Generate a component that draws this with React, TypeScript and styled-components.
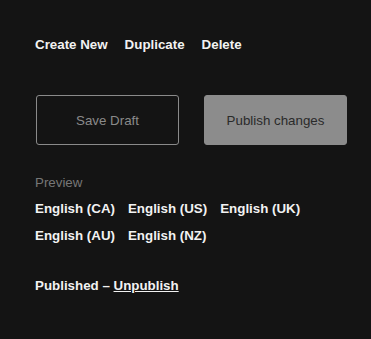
import styled, { createGlobalStyle } from "styled-components";

const GlobalStyle = createGlobalStyle`
  html, body {
    margin: 0;
    background: #141414;
  }
  body {
    font-family: "Liberation Sans", Arial, sans-serif;
  }
`;

const Panel = styled.div`
  display: flex;
  flex-direction: column;
  padding: 37px 24px 0 35px;
  color: #f2f2f2;
`;

const Toolbar = styled.div`
  display: flex;
  gap: 17px;
  margin-bottom: 42px;
`;

const ToolButton = styled.button`
  background: none;
  border: none;
  padding: 0;
  color: #f2f2f2;
  font: bold 13.33px "Liberation Sans", Arial, sans-serif;
  line-height: 16px;
  cursor: pointer;
`;

const Actions = styled.div`
  display: flex;
  gap: 25px;
  margin-left: 1px;
  margin-bottom: 30px;
`;

const ActionButton = styled.button<{ $primary?: boolean }>`
  width: 143px;
  height: 50px;
  border-radius: 3px;
  font: 13.33px "Liberation Sans", Arial, sans-serif;
  border: 1px solid ${(p) => (p.$primary ? "#8c8c8c" : "#8a8a8a")};
  background: ${(p) => (p.$primary ? "#8c8c8c" : "transparent")};
  color: ${(p) => (p.$primary ? "#2a2a2a" : "#8a8a8a")};
  cursor: pointer;
`;

const Label = styled.div`
  color: #777;
  font-size: 13.33px;
  line-height: 16px;
  margin-bottom: 10px;
`;

const Locales = styled.div`
  display: flex;
  flex-wrap: wrap;
  column-gap: 13px;
  row-gap: 11px;
  width: 300px;
  margin-bottom: 34px;
`;

const Locale = styled.a`
  color: #f2f2f2;
  font-weight: bold;
  font-size: 13.33px;
  line-height: 16px;
  text-decoration: none;
  cursor: pointer;
`;

const Status = styled.div`
  font-weight: bold;
  font-size: 13.33px;
  line-height: 16px;
`;

const Unpublish = styled.a`
  color: #f2f2f2;
  text-decoration: underline;
  cursor: pointer;
`;

const locales = ["English (CA)", "English (US)", "English (UK)", "English (AU)", "English (NZ)"];

export default function App() {
  return (
    <>
      <GlobalStyle />
      <Panel>
        <Toolbar>
          <ToolButton>Create New</ToolButton>
          <ToolButton>Duplicate</ToolButton>
          <ToolButton>Delete</ToolButton>
        </Toolbar>
        <Actions>
          <ActionButton>Save Draft</ActionButton>
          <ActionButton $primary>Publish changes</ActionButton>
        </Actions>
        <Label>Preview</Label>
        <Locales>
          {locales.map((l) => (
            <Locale key={l}>{l}</Locale>
          ))}
        </Locales>
        <Status>
          Published – <Unpublish>Unpublish</Unpublish>
        </Status>
      </Panel>
    </>
  );
}
